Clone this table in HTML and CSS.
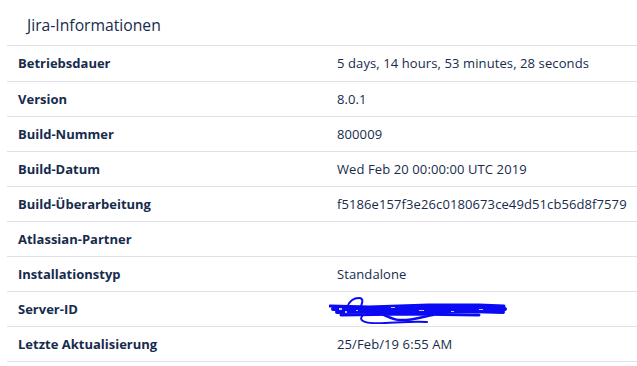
FILE: index.html
```html
<!DOCTYPE html>
<html lang="de">
<head>
<meta charset="utf-8">
<link rel="stylesheet" href="styles.css">
</head>
<body>
<div class="panel">
  <h2 class="title">Jira-Informationen</h2>
  <table class="info">
    <tr><th>Betriebsdauer</th><td>5 days, 14 hours, 53 minutes, 28 seconds</td></tr>
    <tr><th>Version</th><td>8.0.1</td></tr>
    <tr><th>Build-Nummer</th><td>800009</td></tr>
    <tr><th>Build-Datum</th><td>Wed Feb 20 00:00:00 UTC 2019</td></tr>
    <tr><th>Build-Überarbeitung</th><td>f5186e157f3e26c0180673ce49d51cb56d8f7579</td></tr>
    <tr><th>Atlassian-Partner</th><td></td></tr>
    <tr><th>Installationstyp</th><td>Standalone</td></tr>
    <tr><th>Server-ID</th><td>
      <svg class="scribble" width="180" height="30" viewBox="0 -3 180 30">
        <g fill="none" stroke="#0a0af5" stroke-linecap="round" stroke-linejoin="round">
          <path d="M1 9 L40 10 L100 8 L150 8 L175 9" stroke-width="3"/>
          <path d="M4 12 L60 11 L120 11 L176 12" stroke-width="4"/>
          <path d="M8 15 L70 14 L140 14 L174 15" stroke-width="4"/>
          <path d="M12 18 L80 17 L150 18" stroke-width="3"/>
          <path d="M18 10 C20 5 24 1 30 1 C35 1 34 7 30 12" stroke-width="2"/>
          <path d="M34 18 C28 24 36 27 56 26 C76 25 88 24 98 25" stroke-width="2"/>
          <path d="M38 16 C50 12 58 22 70 23 C82 24 92 20 104 18" stroke-width="2.5"/>
          <path d="M100 10 L168 11" stroke-width="4"/>
        </g>
        <g fill="#c8c8e0">
          <rect x="10" y="11" width="3" height="2"/>
          <rect x="16" y="14" width="2" height="2"/>
          <rect x="27" y="13" width="2" height="1"/>
          <rect x="62" y="10" width="4" height="1"/>
          <rect x="90" y="13" width="5" height="1"/>
          <rect x="122" y="14" width="3" height="1"/>
          <rect x="150" y="12" width="4" height="1"/>
        </g>
      </svg>
    </td></tr>
    <tr><th>Letzte Aktualisierung</th><td>25/Feb/19 6:55 AM</td></tr>
  </table>
</div>
</body>
</html>
```

FILE: styles.css
```css
html, body {
  margin: 0;
  padding: 0;
  background: #ffffff;
}
body {
  font-family: "Open Sans", "Noto Sans", sans-serif;
  color: #172b4d;
}
.panel {
  padding-left: 7px;
}
.title {
  margin: 0;
  height: 46px;
  box-sizing: border-box;
  padding: 15px 0 0 20px;
  font-size: 15.7px;
  font-weight: 400;
  line-height: 20px;
  color: #172b4d;
  border-bottom: 1px solid #dfe1e6;
}
.info {
  width: 630px;
  border-collapse: collapse;
}
.info tr {
  height: 35px;
  border-bottom: 1px solid #dfe1e6;
}
.info th,
.info td {
  padding: 0;
  font-size: 13px;
  line-height: 18px;
  vertical-align: middle;
  text-align: left;
  height: 34px;
}
.info th {
  width: 330px;
  padding-left: 11px;
  box-sizing: border-box;
  font-weight: 700;
}
.info td {
  font-weight: 400;
  letter-spacing: 0.1px;
}
.scribble {
  display: block;
  margin-left: -8px;
}
```
